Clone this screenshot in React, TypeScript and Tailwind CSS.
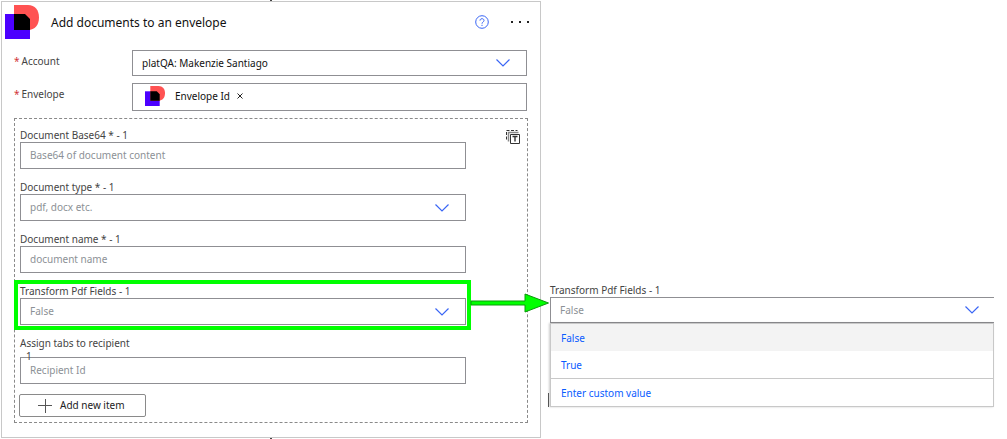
import { clsx } from 'clsx';
import { FC, ReactNode } from 'react';

const inputClasses =
  'block h-[27px] w-full border border-[#8f8f93] bg-white px-[9px] outline-none placeholder:text-[#8c9196] placeholder:opacity-100';

const Logo: FC<{ className?: string }> = ({ className }) => (
  <svg viewBox="0 0 34 34" className={className} aria-hidden="true">
    <path d="M0 9h25v25H0z" fill="#4c00ff" />
    <path d="M9 0h14c7 0 11 5 11 12.500S30 25 23 25H9z" fill="#ff5252" />
    <path d="M9 9h11l5 5v11H9z" fill="#000" />
  </svg>
);

const Chevron: FC<{ className?: string }> = ({ className }) => (
  <svg
    viewBox="0 0 14 8"
    className={clsx('pointer-events-none h-2 w-3.5', className)}
    fill="none"
    stroke="#3a66f5"
    strokeWidth="1.200"
    aria-hidden="true"
  >
    <path d="M.5.500 7 7 13.500.500" />
  </svg>
);

const CopyIcon: FC = () => (
  <svg viewBox="0 0 14 14" className="h-3.5 w-3.5" fill="none" aria-hidden="true">
    <path d="M.5 9.500V.500h11" stroke="#333" strokeDasharray="3 1.500" />
    <path d="M2.500 11.500v-9h10" stroke="#888" strokeWidth="1.500" />
    <path d="M4.500 4.500h9v9h-9z" fill="#fff" stroke="#333" />
    <path d="M6.500 6.500h5M9 6.500v5" stroke="#333" strokeWidth="1.400" />
  </svg>
);

const Arrow: FC = () => (
  <svg
    viewBox="0 0 80 22"
    className="absolute top-2 left-full ml-[3px] h-[22px] w-20"
    fill="#00ff00"
    stroke="#0a9a0a"
    aria-hidden="true"
  >
    <path d="M1 9h54V2l23.500 9L55 20v-7H1z" />
  </svg>
);

interface FieldProps {
  id: string;
  label: string;
  children: ReactNode;
}

const Field: FC<FieldProps> = ({ id, label, children }) => (
  <div className="relative">
    <label htmlFor={id} className="block h-4 leading-[18px]">
      {label}
    </label>
    {children}
  </div>
);

interface SelectProps {
  id: string;
  options: string[];
}

const Select: FC<SelectProps> = ({ id, options }) => (
  <div className="relative text-[#8c9196]">
    <select id={id} className={clsx(inputClasses, 'appearance-none')}>
      {options.map((option) => (
        <option key={option}>{option}</option>
      ))}
    </select>
    <Chevron className="absolute top-2.5 right-[17px]" />
  </div>
);

const RequiredLabel: FC<{ id: string; text: string }> = ({ id, text }) => (
  <label htmlFor={id} className="w-[118px] shrink-0 pt-[3px] leading-4">
    <span className="mr-0.5 text-[#d13438]">*</span>
    {text}
  </label>
);

const EnvelopeCard: FC = () => (
  <section className="relative border border-[#c8c8c8] bg-white pr-3 pb-3.5 pl-3">
    <span className="absolute -top-0.5 left-1/2 -ml-px h-px w-0.5 bg-[#444]" />
    <span className="absolute top-full left-1/2 mt-px -ml-px h-px w-0.5 bg-[#444]" />
    <header className="-ml-[9px] flex h-12 items-start pt-[3px]">
      <Logo className="h-[34px] w-[34px]" />
      <h1 className="ml-3 text-[12px] leading-9 text-[#111]">
        Add documents to an envelope
      </h1>
      <div className="mt-2.5 ml-auto flex items-center gap-[22px] pr-px">
        <button type="button" aria-label="Help">
          <svg viewBox="0 0 14 14" className="h-3.5 w-3.5" fill="none" stroke="#3a66f5" aria-hidden="true">
            <circle cx="7" cy="7" r="6.300" />
            <path d="M5 5.600c0-2.600 4-2.500 4-.1C9 7 7 7 7 8.700M7 9.800v1.200" />
          </svg>
        </button>
        <button type="button" aria-label="More">
          <svg viewBox="0 0 18 4" className="-mr-0.5 h-1 w-[18px]" fill="#222" aria-hidden="true">
            <path d="M0 1h2v2H0zM8 1h2v2H8zM16 1h2v2h-2z" />
          </svg>
        </button>
      </div>
    </header>

    <div className="flex flex-col gap-[7px]">
      <div className="flex items-start pr-px">
        <RequiredLabel id="account" text="Account" />
        <div className="relative flex-1">
          <select
            id="account"
            className="block h-[26px] w-full appearance-none border border-[#8f8f93] bg-white px-[9px] text-[#111] outline-none"
          >
            <option>platQA: Makenzie Santiago</option>
          </select>
          <Chevron className="absolute top-[9px] right-[17px]" />
        </div>
      </div>
      <div className="flex items-start pr-px">
        <RequiredLabel id="envelope" text="Envelope" />
        <div className="flex h-7 flex-1 items-center border border-[#8f8f93] pb-0.5 pl-3 text-[#111]">
          <Logo className="mr-2.5 h-5 w-5" />
          <span>Envelope Id</span>
          <button type="button" aria-label="Remove Envelope Id" className="ml-[7px]">
            <svg viewBox="0 0 6 6" className="h-1.5 w-1.5" stroke="#222" aria-hidden="true">
              <path d="M.5.500l5 5M5.500.500l-5 5" />
            </svg>
          </button>
          <input id="envelope" className="ml-1 w-0 flex-1 outline-none" />
        </div>
      </div>

      <div className="relative border border-dashed border-[#8a8a8a] pt-[7px] pb-[5px] pl-[5px]">
        <button type="button" aria-label="Switch to input entire array" className="absolute top-[11px] right-[7px]">
          <CopyIcon />
        </button>
        <div className="mr-[61px] flex flex-col gap-[9px]">
          <Field id="base64" label="Document Base64 * - 1">
            <input id="base64" placeholder="Base64 of document content" className={clsx(inputClasses, 'pb-0.5')} />
          </Field>
          <Field id="type" label="Document type * - 1">
            <Select id="type" options={['pdf, docx etc.']} />
          </Field>
          <Field id="name" label="Document name * - 1">
            <input id="name" placeholder="document name" className={clsx(inputClasses, 'pb-0.5')} />
          </Field>
          <Field id="transform" label="Transform Pdf Fields - 1">
            <Select id="transform" options={['False', 'True']} />
            <div className="pointer-events-none absolute -top-0.5 -right-[5px] -bottom-[5px] -left-1.5 border-4 border-[#00ff00]">
              <Arrow />
            </div>
          </Field>
          <div>
            <label htmlFor="recipient" className="relative block h-[23px] leading-[18px]">
              Assign tabs to recipient
              <span className="block pl-1.5 leading-2">1</span>
            </label>
            <input id="recipient" placeholder="Recipient Id" className={clsx(inputClasses, 'pb-0.5')} />
          </div>
        </div>
        <button
          type="button"
          className="mt-2.5 -ml-px flex h-[23px] items-center gap-2 rounded-xs border border-[#8a8a8a] pr-5 pl-[18px] text-[#222]"
        >
          <svg viewBox="0 0 14 14" className="h-3.5 w-3.5" stroke="#555" aria-hidden="true">
            <path d="M7.500 0v14M0 6.500h14" />
          </svg>
          Add new item
        </button>
      </div>
    </div>
  </section>
);

const TransformDropdown: FC = () => (
  <section className="mt-[280px] pl-px">
    <label htmlFor="transform-open" className="block h-4 leading-[18px]">
      Transform Pdf Fields - 1
    </label>
    <button
      id="transform-open"
      type="button"
      aria-haspopup="listbox"
      aria-expanded="true"
      className="flex h-[26px] w-full items-center justify-between border-y border-l border-[#8f8f93] pr-[15px] pl-[9px] text-[#8c9196]"
    >
      False
      <Chevron />
    </button>
    <div className="relative">
      <span className="absolute bottom-0 -left-0.5 h-3.5 w-px bg-[#555]" />
      <ul
        role="listbox"
        aria-label="Transform Pdf Fields"
        className="border border-[#c8c8c8] leading-7 text-[#0a5cff] shadow-[-1px_0_2px_rgba(0,0,0,0.2)]"
      >
        <li role="option" aria-selected="true" className="h-[27px] bg-[#f3f3f3] px-2.5">
          False
        </li>
        <li role="option" aria-selected="false" className="h-[27px] px-2.5">
          True
        </li>
        <li role="option" aria-selected="false" className="h-7 border-t border-[#c8c8c8] px-2.5">
          Enter custom value
        </li>
      </ul>
    </div>
  </section>
);

export default function App() {
  return (
    <main className="grid min-h-screen grid-cols-[540fr_445fr] items-start gap-2 bg-white pt-px pr-[13px] pl-px font-['Noto_Sans',sans-serif] text-[10px] text-[#444]">
      <EnvelopeCard />
      <TransformDropdown />
    </main>
  );
}
